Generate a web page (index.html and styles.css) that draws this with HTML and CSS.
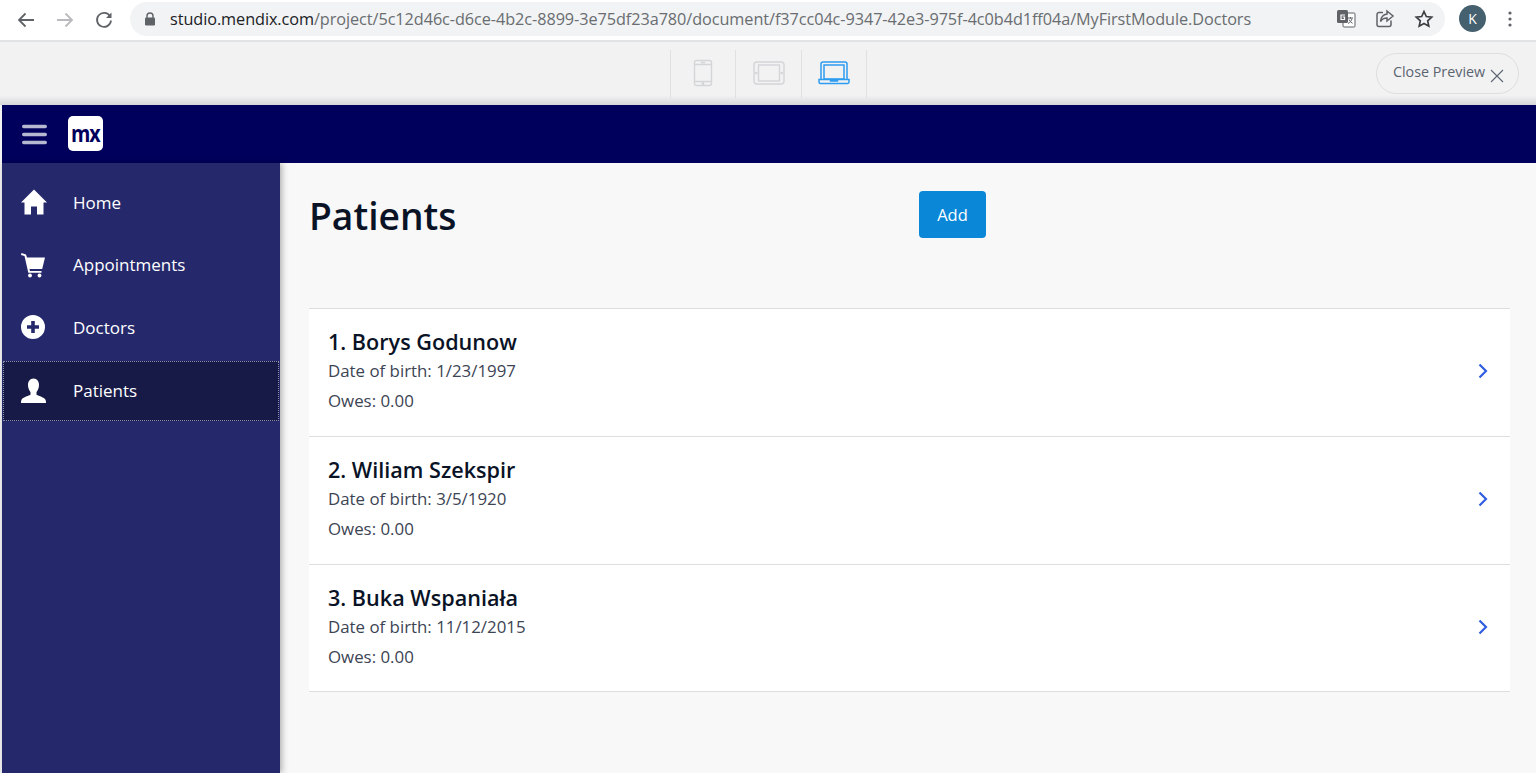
FILE: index.html
```html
<!DOCTYPE html>
<html lang="en">
<head>
<meta charset="utf-8">
<title>Patients</title>
<link rel="stylesheet" href="styles.css">
</head>
<body>
<header class="chrome">
  <svg class="nav-icon" viewBox="0 0 20 20"><path d="M18 10H3M9.500 3.500 3 10l6.500 6.500" fill="none" stroke="#5f6368" stroke-width="1.800"/></svg>
  <svg class="nav-icon" viewBox="0 0 20 20"><path d="M2 10h15M10.500 3.500 17 10l-6.500 6.500" fill="none" stroke="#b8babd" stroke-width="1.800"/></svg>
  <svg class="nav-icon" viewBox="0 0 20 20"><path d="M16 6.200A7 7 0 1 0 17 10.500" fill="none" stroke="#5f6368" stroke-width="1.800"/><path d="M17.500 2.500v5.500h-5.500z" fill="#5f6368"/></svg>
  <div class="omnibox">
    <svg class="lock" viewBox="0 0 12 14"><path d="M3 6V4a3 3 0 0 1 6 0v2" fill="none" stroke="#5f6368" stroke-width="1.400"/><rect x="1" y="5.500" width="10" height="8" rx="1.200" fill="#5f6368"/></svg>
    <span class="url"><span class="host">studio.mendix.com</span>/project/5c12d46c-d6ce-4b2c-8899-3e75df23a780/document/f37cc04c-9347-42e3-975f-4c0b4d1ff04a/MyFirstModule.Doctors</span>
    <div class="omni-actions">
      <svg class="omni-icon" viewBox="0 0 20 20"><rect x="7" y="4" width="12" height="14" rx="1" fill="#fff" stroke="#5f6368"/><rect x="1" y="1" width="11" height="13" rx="1.500" fill="#5f6368"/><path d="M9 6H5v4.500h3.500V8H6.500" fill="none" stroke="#fff" stroke-width="1.200"/><path d="M12 9h5M14.500 8v1.500M16 9.500c-.5 2.500-2 4-4 5M13 10.500c.7 1.700 2 3 3.500 3.800" fill="none" stroke="#5f6368"/></svg>
      <svg class="omni-icon" viewBox="0 0 20 20"><path d="M8 3.500H4A2 2 0 0 0 2 5.500v10a2 2 0 0 0 2 2h10a2 2 0 0 0 2-2v-4" fill="none" stroke="#5f6368" stroke-width="1.500"/><path d="M12 2l6 5-6 5V9c-3.500 0-5 1-6.500 3.500C6 8 8 5.500 12 5z" fill="none" stroke="#5f6368" stroke-width="1.500"/></svg>
      <svg class="omni-icon" viewBox="0 0 20 20"><path d="M10 2.500l2.300 5 5.400.6-4 3.700 1.100 5.400L10 14.500l-4.800 2.700 1.100-5.400-4-3.700 5.400-.6z" fill="none" stroke="#3c4043" stroke-width="1.700"/></svg>
    </div>
  </div>
  <div class="avatar">K</div>
  <svg class="menu-dots" viewBox="0 0 4 16"><circle cx="2" cy="2" r="1.600"/><circle cx="2" cy="8" r="1.600"/><circle cx="2" cy="14" r="1.600"/></svg>
</header>

<section class="preview-bar">
  <div class="devices">
    <div class="device">
      <svg width="20" height="28" viewBox="0 0 20 28" fill="none" stroke="#d4d5d7" stroke-width="1.400"><rect x="1.500" y="1.500" width="17" height="25" rx="2"/><path d="M1.500 5.500h17M1.500 22.500h17M8 3.500h4"/><circle cx="10" cy="24.500" r=".8"/></svg>
    </div>
    <div class="device">
      <svg width="32" height="24" viewBox="0 0 32 24" fill="none" stroke="#d4d5d7" stroke-width="1.400"><rect x="1" y="1" width="30" height="22" rx="3"/><rect x="5.500" y="4" width="21" height="16"/><circle cx="3.200" cy="12" r=".6"/><circle cx="28.800" cy="12" r=".6"/></svg>
    </div>
    <div class="device">
      <svg width="32" height="24" viewBox="0 0 32 24" fill="none" stroke="#2c9cf0" stroke-width="1.500"><path d="M3 18.500V3a2 2 0 0 1 2-2h22a2 2 0 0 1 2 2v15.500"/><rect x="6" y="4" width="20" height="14"/><path d="M1 18.500h30V21a1.500 1.500 0 0 1-1.500 1.500h-27A1.500 1.500 0 0 1 1 21zM12.500 18.500v1.500h7v-1.500"/></svg>
    </div>
  </div>
  <div class="close-preview">
    <span>Close Preview</span>
    <svg width="14" height="14" viewBox="0 0 14 14"><path d="M1 1l12 12M13 1 1 13" stroke="#5b6470" stroke-width="1.100" fill="none"/></svg>
  </div>
</section>

<div class="app">
  <div class="topbar">
    <svg class="hamburger" width="25" height="21" viewBox="0 0 25 21"><path d="M1.700 2.500h21.600M1.700 10.500h21.600M1.700 18.500h21.600" stroke="#b6b7d0" stroke-width="3.400" stroke-linecap="round"/></svg>
    <div class="logo"><span class="logo-text">mx</span></div>
  </div>
  <div class="app-body">
    <nav class="sidebar">
      <a class="nav-item">
        <svg class="nav-glyph" viewBox="0 0 28 26"><path d="M14 .5 27 13.500h-3.500V25.500h-6.500v-8h-6v8H4.500V13.500H1z" fill="#fff"/></svg>
        <span>Home</span>
      </a>
      <a class="nav-item">
        <svg class="nav-glyph" viewBox="0 0 28 26"><path d="M1.500 1 6 2.500 7 5.500h18l-2.800 11.500H9.500l.4 2H21.500v1.800H8.300L4.500 4 1 3z" fill="#fff"/><circle cx="10" cy="23.500" r="1.900" fill="#fff"/><circle cx="19.500" cy="23.500" r="1.900" fill="#fff"/></svg>
        <span>Appointments</span>
      </a>
      <a class="nav-item">
        <svg class="nav-glyph" viewBox="0 0 28 26"><path fill-rule="evenodd" d="M13 1a12 12 0 1 1 0 24 12 12 0 0 1 0-24zM11.200 7v4.200H7v3.600h4.200V19h3.600v-4.200H19v-3.600h-4.200V7z" fill="#fff"/></svg>
        <span>Doctors</span>
      </a>
      <a class="nav-item active">
        <svg class="nav-glyph" viewBox="0 0 28 26"><path d="M13.500.5c3.700 0 5.500 3 5.500 6.500 0 3-1.200 5.500-2.500 7v2.800c2.700 1.500 7.500 2.400 9 5 .5 1 .5 2 .5 3.200H1c0-1.200 0-2.200.5-3.200 1.500-2.600 6.300-3.500 9-5V14C9.200 12.500 8 10 8 7 8 3.500 9.800.5 13.500.5z" fill="#fff"/></svg>
        <span>Patients</span>
      </a>
    </nav>
    <main class="content">
      <div class="page-head">
        <h1>Patients</h1>
        <div class="add-slot"><button class="add">Add</button></div>
      </div>
      <ul class="list">
        <li class="row">
          <div class="row-text">
            <h2>1. Borys Godunow</h2>
            <p class="dob">Date of birth: 1/23/1997</p>
            <p class="owes">Owes: 0.00</p>
          </div>
          <svg class="chev" width="12" height="16" viewBox="0 0 12 16"><path d="M2.500 1.500 9 8l-6.500 6.500" fill="none" stroke="#2f5fe0" stroke-width="2.200"/></svg>
        </li>
        <li class="row">
          <div class="row-text">
            <h2>2. Wiliam Szekspir</h2>
            <p class="dob">Date of birth: 3/5/1920</p>
            <p class="owes">Owes: 0.00</p>
          </div>
          <svg class="chev" width="12" height="16" viewBox="0 0 12 16"><path d="M2.500 1.500 9 8l-6.500 6.500" fill="none" stroke="#2f5fe0" stroke-width="2.200"/></svg>
        </li>
        <li class="row">
          <div class="row-text">
            <h2>3. Buka Wspaniała</h2>
            <p class="dob">Date of birth: 11/12/2015</p>
            <p class="owes">Owes: 0.00</p>
          </div>
          <svg class="chev" width="12" height="16" viewBox="0 0 12 16"><path d="M2.500 1.500 9 8l-6.500 6.500" fill="none" stroke="#2f5fe0" stroke-width="2.200"/></svg>
        </li>
      </ul>
    </main>
  </div>
</div>
</body>
</html>
```

FILE: styles.css
```css
* { box-sizing: border-box; }
html, body { margin: 0; height: 773px; overflow: hidden; }
body { font-family: "Open Sans", "Noto Sans", sans-serif; background: #f2f2f3; display: flex; flex-direction: column; }

.chrome { height: 42px; background: #fff; border-bottom: 2px solid #e2e3e4; display: flex; align-items: center; padding: 0 16px; flex: none; }
.nav-icon { width: 20px; height: 20px; margin-right: 19px; flex: none; }
.nav-icon:nth-child(3) { margin-right: 16px; }
.omnibox { width: 1315px; height: 34px; margin-top: -3px; background: #f1f3f4; border-radius: 17px; display: flex; align-items: center; padding: 0 11px 0 14px; flex: none; }
.lock { width: 12px; height: 14px; margin-right: 14px; flex: none; }
.url { font-size: 16.250px; color: #6a6d71; white-space: nowrap; letter-spacing: -.07px; }
.host { color: #202124; }
.omni-actions { margin-left: auto; display: flex; gap: 19px; }
.omni-icon { width: 20px; height: 20px; }
.avatar { width: 27px; height: 27px; margin-left: 14px; margin-top: -3px; border-radius: 50%; background: #45606e; color: #fff; font-size: 14px; display: flex; align-items: center; justify-content: center; flex: none; }
.menu-dots { width: 4px; height: 16px; margin-left: 22px; margin-top: -3px; fill: #5f6368; flex: none; }

.preview-bar { height: 63px; position: relative; display: flex; justify-content: center; align-items: flex-start; flex: none; background: linear-gradient(#f2f2f3 85%, #d6d6d8); padding-top: 8px; }
.devices { display: flex; margin-left: 1px; border-left: 1px solid #e0e0e2; height: 48px; }
.device { width: 65.670px; height: 48px; border-right: 1px solid #e0e0e2; display: flex; align-items: center; justify-content: center; padding-bottom: 3px; }
.close-preview { position: absolute; right: 17px; top: 11px; width: 143px; height: 41px; border: 1px solid #dddedf; border-radius: 21px; display: flex; align-items: center; padding-left: 16px; gap: 5px; font-size: 14.300px; color: #5b6470; }
.close-preview span { margin-top: -5px; }
.close-preview svg { margin-top: 5px; }

.app { flex: 1; min-height: 0; margin-left: 2px; display: flex; flex-direction: column; background: #f8f8f8; }
.topbar { height: 58px; background: #00005c; display: flex; align-items: center; padding-left: 20px; flex: none; }
.logo { width: 35px; height: 35px; margin: -1px 0 0 21px; background: #fff; border-radius: 5px; color: #00005c; font: 700 24px/33px "Open Sans", sans-serif; letter-spacing: -1.500px; text-align: center; overflow: hidden; }
.logo-text { display: inline-block; transform: scaleX(.82); }

.app-body { flex: 1; min-height: 0; display: flex; }
.sidebar { width: 278px; flex: none; background: #25296b; box-shadow: 2px 0 6px rgba(0,0,0,.3); display: flex; flex-direction: column; padding-top: 8px; position: relative; }
.nav-item { height: 62.500px; display: flex; align-items: center; padding-left: 18px; color: #fff; font-size: 17px; }
.nav-glyph { width: 28px; height: 26px; margin-right: 25px; flex: none; }
.nav-item.active { height: 60px; margin: 2px 1px 0 1px; padding-left: 16px; background: #171a47; border: 1px dotted #8a8ca8; }

.content { flex: 1; min-width: 0; padding: 0 26px 0 29px; }
.page-head { height: 145px; display: flex; align-items: flex-start; }
.page-head h1 { margin: 27px 0 0 0; width: 600px; font-size: 37.200px; line-height: 52px; font-weight: 600; color: #0a1326; }
.add-slot { padding-top: 28px; margin-left: 10px; }
.add { width: 67px; height: 47px; background: #0b87d8; color: #fff; border: 0; border-radius: 4px; font: 16.500px "Open Sans", sans-serif; }

.list { list-style: none; margin: 0; padding: 0; border-top: 1px solid #ddd; background: #fff; }
.row { height: 128px; padding: 18px 21px 0 19px; border-bottom: 1px solid #dedede; display: flex; justify-content: space-between; align-items: flex-start; }
.row:last-child { height: 127px; }
.row h2 { margin: 0; font-size: 21.600px; line-height: 29px; font-weight: 600; color: #0a1326; }
.row p { margin: 0; font-size: 16.850px; line-height: 30px; color: #3c4454; }
.chev { margin-top: 36px; }
```
